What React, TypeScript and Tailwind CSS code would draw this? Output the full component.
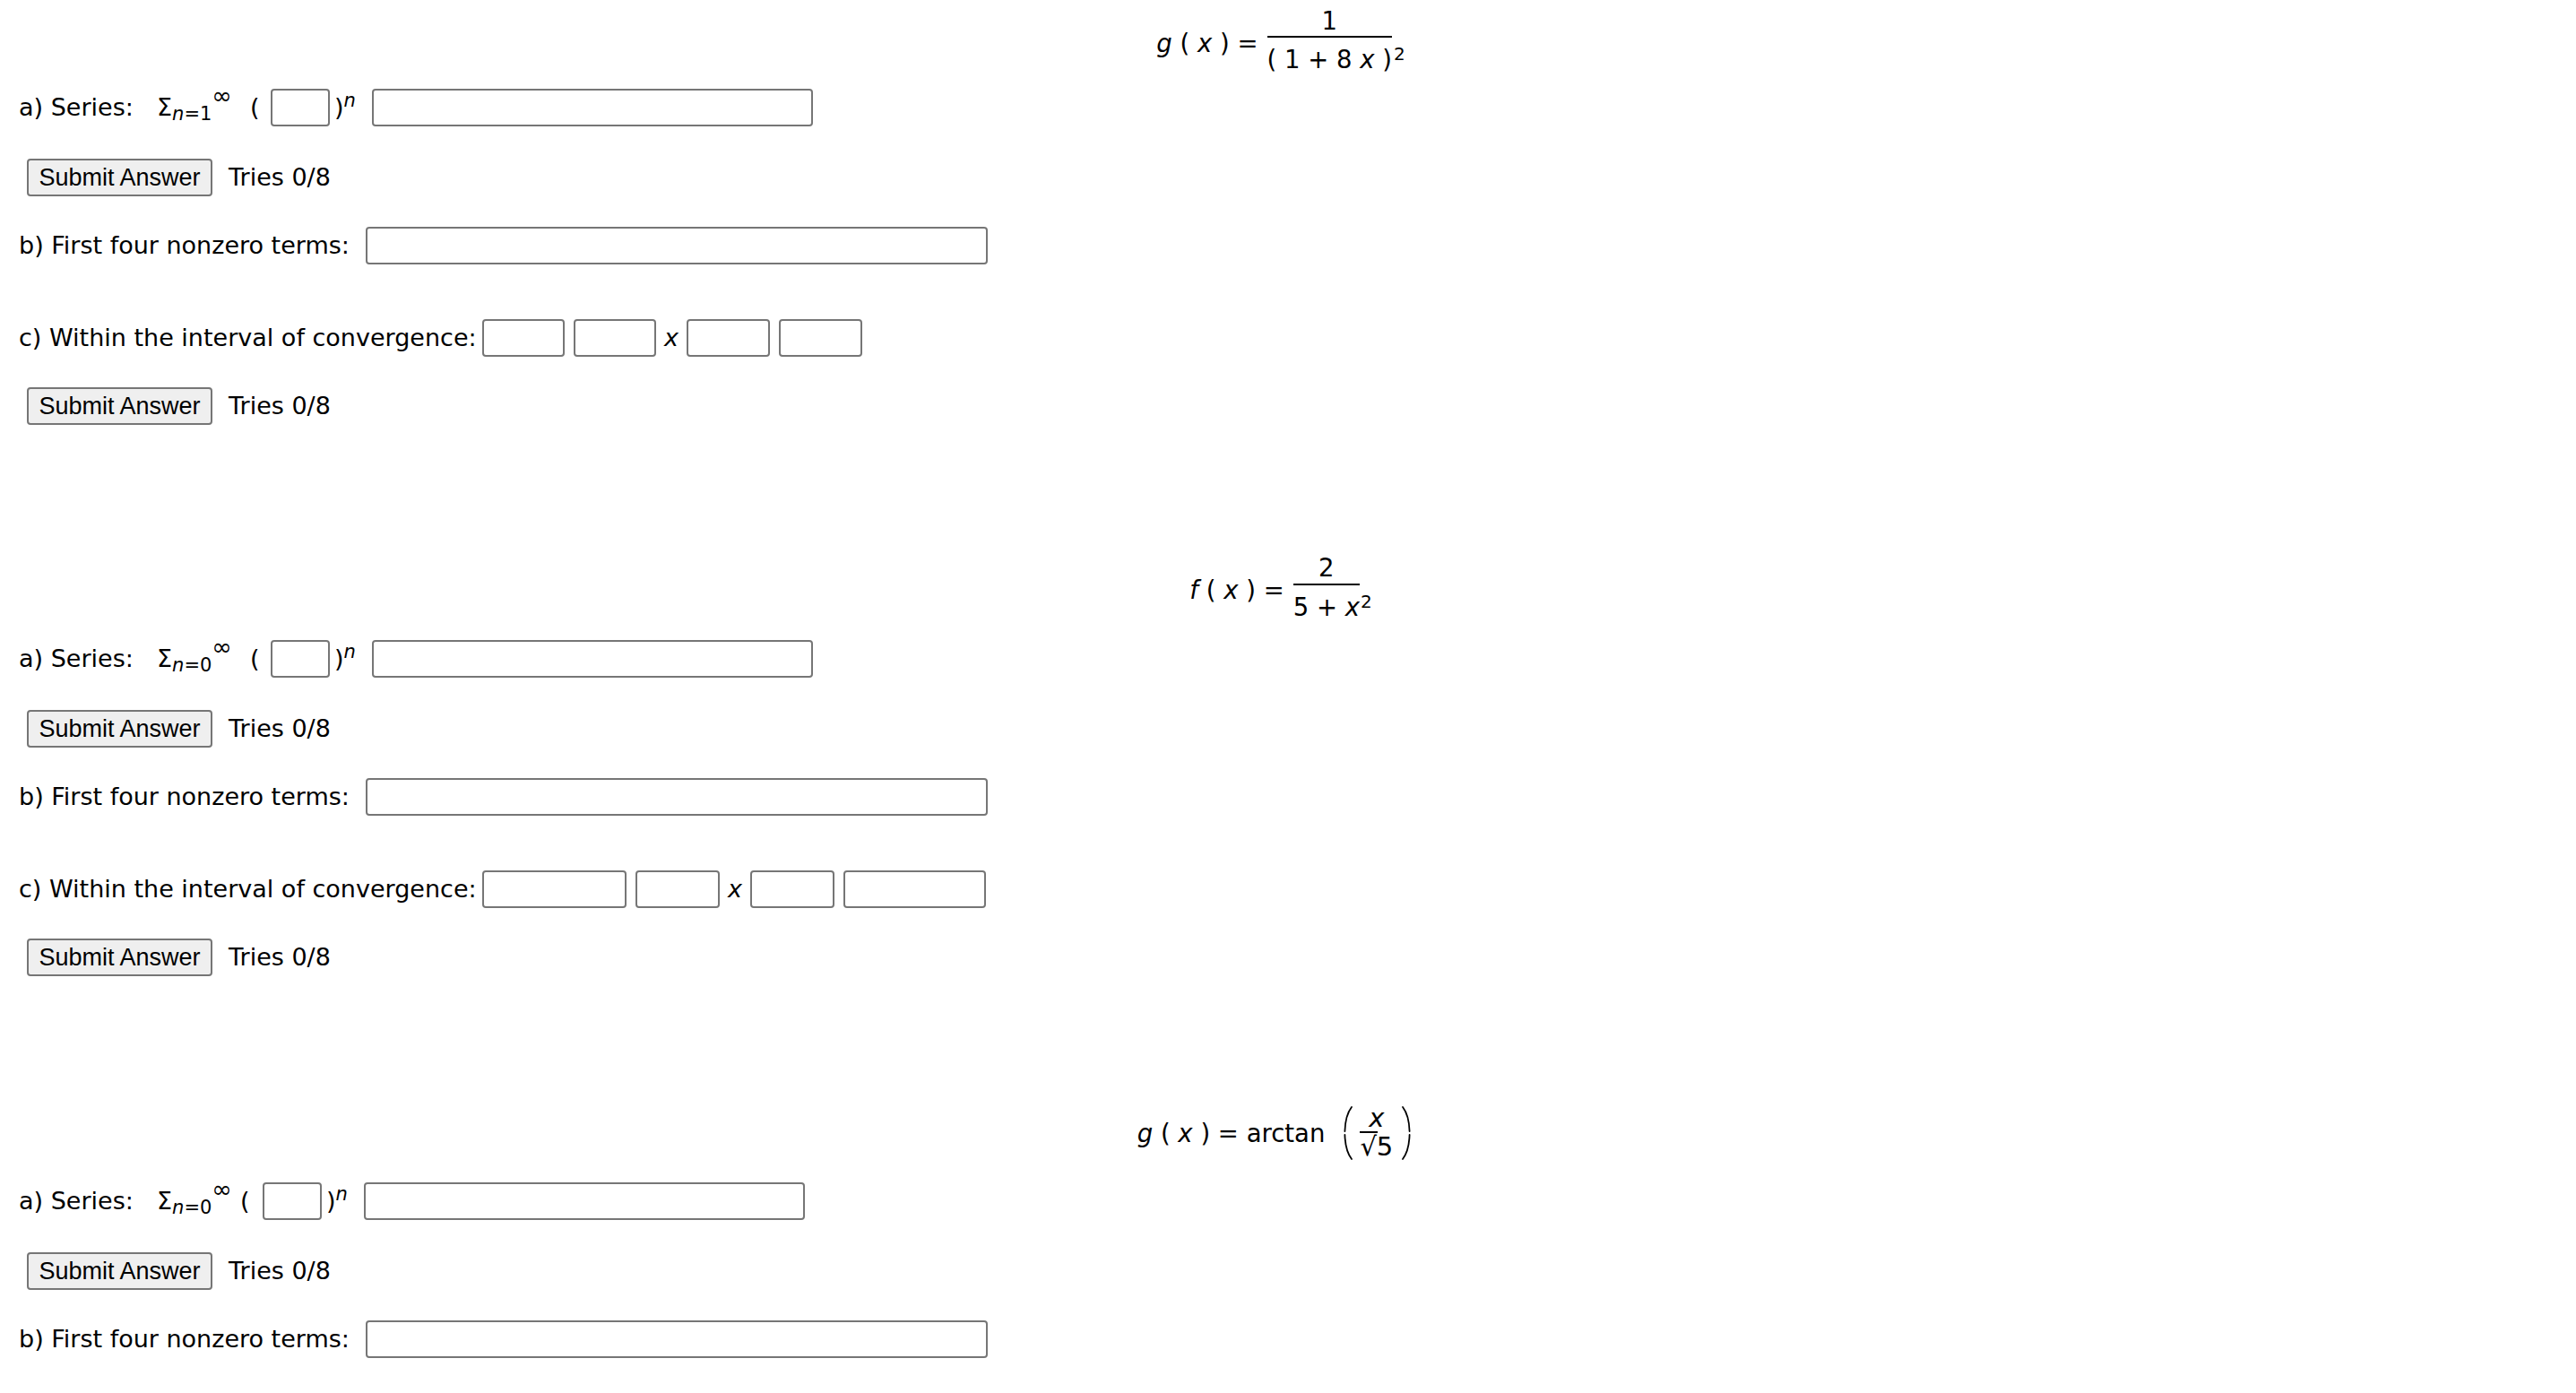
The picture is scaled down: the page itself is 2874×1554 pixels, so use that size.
import React from 'react'

const box = 'h-[42px] shrink-0 rounded-[4px] border-2 border-[#767676] bg-white'

function Input({ className = '' }: { className?: string }) {
  return <input type="text" className={`${box} ${className}`} />
}

function SubmitRow({ className = '' }: { className?: string }) {
  return (
    <div className={`flex h-[42px] items-center ${className}`}>
      <button className="ml-[9px] h-[42px] w-[207px] rounded-[4px] border-2 border-[#767676] bg-[#efefef] font-['Liberation_Sans',Arial,sans-serif] text-[27px] leading-none text-black">
        Submit Answer
      </button>
      <span className="ml-[18px]">Tries 0/8</span>
    </div>
  )
}

function SeriesRow({
  from,
  sigmaW,
  parenW,
  className = '',
}: {
  from: string
  sigmaW: string
  parenW: string
  className?: string
}) {
  return (
    <div className={`flex h-[42px] items-center ${className}`}>
      <span className="w-[154px] shrink-0">a) Series:</span>
      <span className={`shrink-0 whitespace-nowrap ${sigmaW}`}>
        Σ
        <sub className="text-[21px]">
          <i>n</i>={from}
        </sub>
        <sup className="text-[27px]">∞</sup>
      </span>
      <span className={`shrink-0 ${parenW}`}>(</span>
      <Input className="w-[66px]" />
      <span className="w-[47px] shrink-0 pl-[5px]">
        )<sup className="text-[21px]">
          <i>n</i>
        </sup>
      </span>
      <Input className="w-[492px]" />
    </div>
  )
}

function TermsRow({ className = '' }: { className?: string }) {
  return (
    <div className={`flex h-[42px] items-center ${className}`}>
      <span className="w-[387px] shrink-0">b) First four nonzero terms:</span>
      <Input className="w-[694px]" />
    </div>
  )
}

function IntervalRow({ widths, className = '' }: { widths: string[]; className?: string }) {
  return (
    <div className={`flex h-[42px] items-center ${className}`}>
      <span className="w-[517px] shrink-0">c) Within the interval of convergence:</span>
      <Input className={widths[0]} />
      <Input className={`ml-[10px] ${widths[1]}`} />
      <i className="w-[34px] shrink-0 text-center">x</i>
      <Input className={widths[2]} />
      <Input className={`ml-[10px] ${widths[3]}`} />
    </div>
  )
}

function Paren({ right = false }: { right?: boolean }) {
  return (
    <svg width="12" height="62" viewBox="0 0 12 62" className={right ? 'ml-[9px] shrink-0' : 'ml-[20px] shrink-0'}>
      <g fill="none" stroke="black" strokeWidth="1.8" strokeLinecap="round">
        {right ? (
          <>
            <path d="M2 2 Q9 11 9.6 29" />
            <path d="M9.6 33 Q9 51 2 60" />
          </>
        ) : (
          <>
            <path d="M10 2 Q3 11 2.4 29" />
            <path d="M2.4 33 Q3 51 10 60" />
          </>
        )}
      </g>
    </svg>
  )
}

export default function App() {
  return (
    <div className="min-h-screen w-full bg-white text-[27px] leading-[32px] text-black font-['DejaVu_Sans','Verdana',sans-serif]">
      {/* problem 1 */}
      <div className="mt-[6px] flex h-[84px] items-center justify-center pr-[16px] text-[27.5px]">
        <span>
          <i>g</i> ( <i>x</i> ) =
        </span>
        <span className="ml-[10px] flex items-start">
          <span className="flex flex-col">
            <span className="flex h-[34px] items-center justify-center">
              <span>1</span>
            </span>
            <span className="h-[2px] bg-black" />
            <span className="flex h-[48px] items-center justify-center">
              <span>
                ( 1 + 8 <i>x</i> )
              </span>
            </span>
          </span>
          <span className="ml-[2px] mt-[44px] text-[20px] leading-[20px]">2</span>
        </span>
      </div>

      <div className="pl-[21px]">
        <SeriesRow from="1" sigmaW="w-[104px]" parenW="w-[23px]" className="mt-[9px]" />
        <SubmitRow className="mt-[36px]" />
        <TermsRow className="mt-[34px]" />
        <IntervalRow widths={['w-[92px]', 'w-[92px]', 'w-[93px]', 'w-[93px]']} className="mt-[61px]" />
        <SubmitRow className="mt-[34px]" />
      </div>

      {/* problem 2 */}
      <div className="mt-[141px] flex h-[86px] items-center justify-center pr-[16px] text-[27.5px]">
        <span>
          <i>f</i> ( <i>x</i> ) =
        </span>
        <span className="ml-[10px] flex items-start">
          <span className="flex flex-col">
            <span className="flex h-[36px] items-center justify-center">
              <span>2</span>
            </span>
            <span className="h-[2px] bg-black" />
            <span className="flex h-[48px] items-center justify-center">
              <span>
                5 + <i>x</i>
              </span>
            </span>
          </span>
          <span className="ml-[1px] mt-[46px] text-[20px] leading-[20px]">2</span>
        </span>
      </div>

      <div className="pl-[21px]">
        <SeriesRow from="0" sigmaW="w-[104px]" parenW="w-[23px]" className="mt-[13px]" />
        <SubmitRow className="mt-[36px]" />
        <TermsRow className="mt-[34px]" />
        <IntervalRow widths={['w-[161px]', 'w-[94px]', 'w-[94px]', 'w-[159px]']} className="mt-[61px]" />
        <SubmitRow className="mt-[34px]" />
      </div>

      {/* problem 3 */}
      <div className="mt-[137px] flex h-[76px] items-center justify-center pr-[30px] text-[27.5px]">
        <span>
          <i>g</i> ( <i>x</i> ) = arctan
        </span>
        <Paren />
        <span className="ml-[7px] flex flex-col items-center text-[29px]">
          <span className="leading-[29px]">
            <i>x</i>
          </span>
          <span className="h-[2px] w-[20px] self-start bg-black" />
          <span className="leading-[31px]">√5</span>
        </span>
        <Paren right />
      </div>

      <div className="pl-[21px]">
        <SeriesRow from="0" sigmaW="w-[93px]" parenW="w-[25px]" className="mt-[17px]" />
        <SubmitRow className="mt-[36px]" />
        <TermsRow className="mt-[34px]" />
      </div>
    </div>
  )
}
